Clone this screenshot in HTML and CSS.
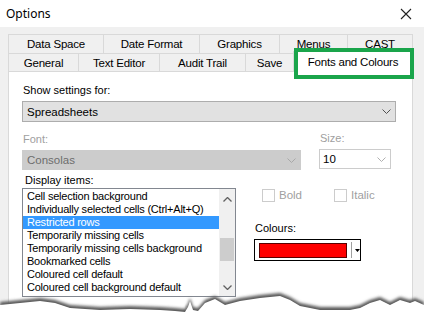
FILE: index.html
```html
<!DOCTYPE html>
<html>
<head>
<meta charset="utf-8">
<link rel="stylesheet" href="styles.css">
</head>
<body>
<div class="window">
  <div class="titlebar">
    <span class="title">Options</span>
    <svg class="close" width="12" height="12" viewBox="0 0 12 12"><path d="M1 1 L11 11 M11 1 L1 11" stroke="#222" stroke-width="1.1" fill="none"/></svg>
  </div>
  <div class="tabs">
    <div class="tabrow back">
      <div class="tab w95">Data Space</div>
      <div class="tab w96">Date Format</div>
      <div class="tab w80">Graphics</div>
      <div class="tab w68">Menus</div>
      <div class="tab w65">CAST</div>
    </div>
    <div class="tabrow front">
      <div class="tab w70">General</div>
      <div class="tab w81">Text Editor</div>
      <div class="tab w86">Audit Trail</div>
      <div class="tab w48">Save</div>
      <div class="tab w119 active">Fonts and Colours<span class="highlight"></span></div>
    </div>
  </div>
  <div class="panel">
    <div class="label">Show settings for:</div>
    <div class="combo wide">
      <span>Spreadsheets</span>
      <svg class="chev" width="9" height="5" viewBox="0 0 9 5"><path d="M0.5 0.5 L4.5 4.5 L8.5 0.5" stroke="#505050" fill="none"/></svg>
    </div>
    <div class="fontrow">
      <div class="fontcol">
        <div class="label dis">Font:</div>
        <div class="combo disabled">
          <span>Consolas</span>
          <svg class="chev" width="9" height="5" viewBox="0 0 9 5"><path d="M0.5 0.5 L4.5 4.5 L8.5 0.5" stroke="#a8a8a8" fill="none"/></svg>
        </div>
      </div>
      <div class="sizecol">
        <div class="label dis up">Size:</div>
        <div class="combo sizebox">
          <span>10</span>
          <svg class="chev" width="9" height="5" viewBox="0 0 9 5"><path d="M0.5 0.5 L4.5 4.5 L8.5 0.5" stroke="#b0b0b0" fill="none"/></svg>
        </div>
      </div>
    </div>
    <div class="lower">
      <div class="leftcol">
        <div class="label items">Display items:</div>
        <div class="listbox">
          <ul class="list">
            <li>Cell selection background</li>
            <li>Individually selected cells (Ctrl+Alt+Q)</li>
            <li class="sel">Restricted rows</li>
            <li>Temporarily missing cells</li>
            <li>Temporarily missing cells background</li>
            <li>Bookmarked cells</li>
            <li>Coloured cell default</li>
            <li>Coloured cell background default</li>
          </ul>
          <div class="scrollbar">
            <svg width="9" height="5" viewBox="0 0 9 5"><path d="M0.5 4.5 L4.5 0.5 L8.5 4.5" stroke="#606060" stroke-width="1.3" fill="none"/></svg>
            <div class="track"><div class="thumb"></div></div>
            <svg width="9" height="5" viewBox="0 0 9 5"><path d="M0.5 0.5 L4.5 4.5 L8.5 0.5" stroke="#606060" stroke-width="1.3" fill="none"/></svg>
          </div>
        </div>
      </div>
      <div class="rightcol">
        <div class="checks">
          <label class="check"><span class="box"></span>Bold</label>
          <label class="check"><span class="box"></span>Italic</label>
        </div>
        <div class="label colours">Colours:</div>
        <div class="colorbtn">
          <span class="swatch"></span>
          <span class="divider"></span>
          <svg width="5" height="3" viewBox="0 0 5 3"><path d="M0 0 L5 0 L2.5 3 Z" fill="#000"/></svg>
        </div>
      </div>
    </div>
  </div>
  <svg class="torn" width="424" height="36" viewBox="0 290 424 36">
    <defs>
      <filter id="blur" x="-5%" y="-50%" width="110%" height="200%"><feGaussianBlur stdDeviation="1.6"/></filter>
    </defs>
    <path d="M0 302 L10 301 L20 300 L40 298 L55 300 L70 305 L100 307 L130 306 L160 307 L175 308 L185 309 L188 304 L190 298 L193 307 L198 308 L205 300 L215 296 L225 302 L240 298 L260 295 L280 293 L290 297 L300 303 L320 307 L350 307 L360 305 L370 300 L380 297 L390 302 L400 297 L410 300 L415 298 L424 302 L424 330 L0 330 Z" fill="#5a5a5a" filter="url(#blur)"/>
    <path d="M186 306 L189 322 L192 306 Z" fill="#8a8a8a" filter="url(#blur)"/>
    <path d="M0 305 L10 304 L20 303 L40 301 L55 303 L70 308 L100 310 L130 309 L160 310 L175 311 L185 312 L188 307 L190 301 L193 310 L198 311 L205 303 L215 299 L225 305 L240 301 L260 298 L280 296 L290 300 L300 306 L320 310 L350 310 L360 308 L370 303 L380 300 L390 305 L400 300 L410 303 L415 301 L424 305 L424 330 L0 330 Z" fill="#ffffff"/>
  </svg>
</div>
</body>
</html>
```

FILE: styles.css
```css
* { box-sizing: border-box; }
html, body { margin: 0; padding: 0; }
body {
  width: 424px;
  height: 324px;
  overflow: hidden;
  background: #ffffff;
  font-family: "Liberation Sans", Arial, sans-serif;
  color: #000;
}
.window {
  position: relative;
  width: 424px;
  height: 324px;
  background: #f0f0f0;
}
.titlebar {
  height: 27px;
  background: #ffffff;
  display: flex;
  align-items: center;
  justify-content: space-between;
  padding: 0 12px 0 6px;
}
.title {
  font-family: "Noto Sans", sans-serif;
  font-size: 12px;
  color: #000;
}
.close { display: block; }
.tabs {
  padding-top: 7px;
  padding-left: 8px;
}
.tabrow {
  display: flex;
  font-size: 11.5px;
  letter-spacing: -0.2px;
}
.tabrow.back { height: 19px; }
.tabrow.front { height: 18px; }
.tab {
  border: 1px solid #d9d9d9;
  border-bottom: none;
  margin-right: -1px;
  background: #f0f0f0;
  display: flex;
  align-items: center;
  justify-content: center;
  color: #000;
  position: relative;
}
.w95 { width: 96px; }
.w96 { width: 97px; }
.w80 { width: 81px; }
.w68 { width: 69px; }
.w65 { width: 66px; }
.w70 { width: 71px; }
.w81 { width: 82px; }
.w86 { width: 87px; }
.w48 { width: 49px; }
.w119 { width: 120px; }
.tab.active {
  background: #ffffff;
  margin-top: -2px;
  height: 21px;
  z-index: 2;
}
.highlight {
  position: absolute;
  left: 0;
  top: -4px;
  width: 120px;
  height: 31px;
  border: 4px solid #1aa54b;
}
.panel {
  width: 405px;
  height: 240px;
  margin-left: 8px;
  background: #ffffff;
  border: 1px solid #d9d9d9;
  padding: 12px 0 0 13px;
  font-size: 11px;
}
.label {
  height: 13px;
  line-height: 13px;
  font-size: 11px;
  color: #000;
  padding-left: 1px;
}
.label.dis { color: #a0a0a0; }
.combo {
  display: flex;
  align-items: center;
  justify-content: space-between;
  height: 21px;
  border: 1px solid #adadad;
  background: #e1e1e1;
  padding: 0 4px 0 4px;
  font-size: 11.5px;
}
.combo.wide {
  width: 374px;
  margin-top: 4px;
}
.chev { display: block; }
.fontrow {
  display: flex;
  margin-top: 11px;
}
.fontcol { width: 279px; }
.fontcol .combo {
  margin-top: 4px;
  height: 20px;
}
.combo.disabled {
  background: #cccccc;
  border-color: #cccccc;
  color: #6d6d6d;
}
.sizecol {
  width: 72px;
  margin-left: 18px;
}
.label.up { margin-top: -1px; margin-bottom: 1px; }
.combo.sizebox {
  margin-top: 4px;
  height: 20px;
  background: #ffffff;
  border-color: #cccccc;
  color: #000;
  padding-left: 3px;
}
.lower {
  display: flex;
  margin-top: 4px;
}
.leftcol { width: 214px; }
.label.items { padding-left: 3px; }
.listbox {
  margin-top: 1px;
  width: 214px;
  height: 109px;
  border: 1px solid #828790;
  display: flex;
  background: #fff;
}
.list {
  list-style: none;
  margin: 0;
  padding: 1px 0 0 0;
  flex: 1;
  font-size: 11px;
  letter-spacing: -0.22px;
}
.list li {
  height: 13px;
  line-height: 13px;
  padding-left: 4px;
  white-space: nowrap;
}
.list li.sel {
  background: #3399ff;
  color: #ffffff;
}
.scrollbar {
  width: 16px;
  background: #f0f0f0;
  display: flex;
  flex-direction: column;
  align-items: center;
  padding: 8px 0 6px;
}
.track {
  flex: 1;
  width: 100%;
  padding-top: 36px;
}
.thumb {
  height: 23px;
  background: #cdcdcd;
  margin: 0 1px;
}
.rightcol {
  margin-left: 18px;
  padding-top: 14px;
}
.checks {
  display: flex;
  padding-left: 8px;
  height: 14px;
}
.check {
  display: flex;
  align-items: center;
  color: #a0a0a0;
  font-size: 11.5px;
}
.check + .check { margin-left: 32px; }
.box {
  width: 13px;
  height: 13px;
  border: 1px solid #cccccc;
  background: #fff;
  margin-right: 4px;
}
.label.colours {
  margin-top: 20px;
  padding-left: 1px;
}
.colorbtn {
  margin-top: 4px;
  width: 107px;
  height: 22px;
  border: 1px solid #000;
  display: flex;
  align-items: center;
  padding-left: 4px;
}
.swatch {
  width: 89px;
  height: 15px;
  background: #ff0000;
  border: 1px solid #5a0000;
}
.divider {
  width: 1px;
  height: 16px;
  background: #a0a0a0;
  margin-left: 4px;
  margin-right: 3px;
}
.colorbtn svg { display: block; }
.torn {
  position: absolute;
  left: 0;
  top: 290px;
  display: block;
}
```
